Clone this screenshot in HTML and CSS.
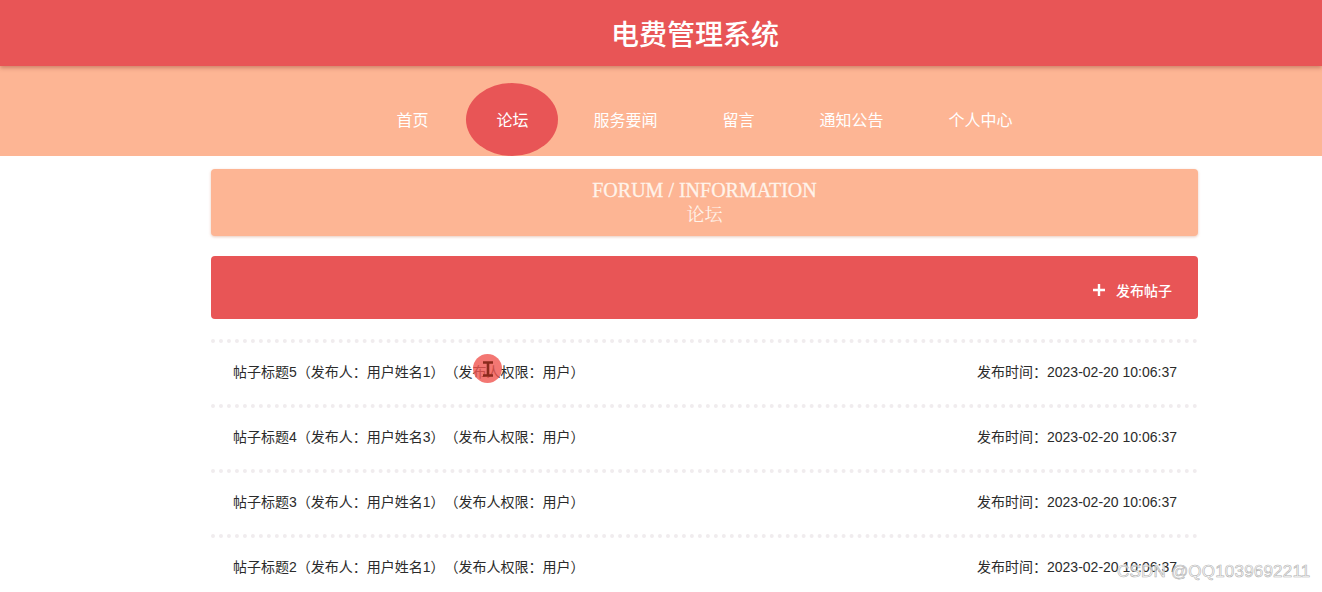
FILE: index.html
```html
<!DOCTYPE html>
<html lang="zh-CN">

<head>
    <meta charset="UTF-8">
    <meta name="viewport" content="width=device-width, initial-scale=1.0">
    <title>电费管理系统</title>
    <link rel="stylesheet" href="styles.css">
</head>

<body>
    <div class="header">
        <h1 class="site-title">电费管理系统</h1>
    </div>

    <div class="nav">
        <ul class="nav-list">
            <li><a href="#">首页</a></li>
            <li class="active"><a href="#">论坛</a></li>
            <li><a href="#">服务要闻</a></li>
            <li><a href="#">留言</a></li>
            <li><a href="#">通知公告</a></li>
            <li><a href="#">个人中心</a></li>
        </ul>
    </div>

    <div class="container">
        <div class="page-title">
            <div class="page-title-en">FORUM / INFORMATION</div>
            <div class="page-title-cn">论坛</div>
        </div>

        <div class="action-bar">
            <button class="add-btn">
                <svg width="14" height="14" viewBox="0 0 14 14">
                    <path d="M7 1v12M1 7h12" stroke="#fff" stroke-width="2.4" fill="none" />
                </svg>
                发布帖子
            </button>
        </div>

        <ul class="post-list">
            <li>
                <span class="post-title">帖子标题5（发布人：用户姓名1）（发布人权限：用户）</span>
                <span class="post-time">发布时间：2023-02-20 10:06:37</span>
            </li>
            <li>
                <span class="post-title">帖子标题4（发布人：用户姓名3）（发布人权限：用户）</span>
                <span class="post-time">发布时间：2023-02-20 10:06:37</span>
            </li>
            <li>
                <span class="post-title">帖子标题3（发布人：用户姓名1）（发布人权限：用户）</span>
                <span class="post-time">发布时间：2023-02-20 10:06:37</span>
            </li>
            <li>
                <span class="post-title">帖子标题2（发布人：用户姓名1）（发布人权限：用户）</span>
                <span class="post-time">发布时间：2023-02-20 10:06:37</span>
            </li>
        </ul>
    </div>

    <!-- screen recorder click marker -->
    <div class="click-marker">
        <svg width="14" height="16" viewBox="0 0 14 16">
            <path d="M2 1.5h10M2 14.5h10M7 1.5v13" stroke="#8a2a1c" stroke-width="2.6" fill="none" />
        </svg>
    </div>

    <div class="watermark">CSDN @QQ1039692211</div>
</body>

</html>
```

FILE: styles.css
```css
* {
    margin: 0;
    padding: 0;
    box-sizing: border-box;
    list-style: none;
    text-decoration: none;
}

body {
    background-color: white;
    font-family: "Liberation Sans", "Noto Sans CJK SC", sans-serif;
    text-spacing-trim: space-all;
    overflow: hidden;
}

.header {
    position: relative;
    z-index: 2;
    height: 66px;
    background-color: #e85556;
    box-shadow: 0 2px 4px rgba(120, 40, 30, 0.35);
    display: flex;
    align-items: center;
    justify-content: center;
    padding-left: 68px;
}

.site-title {
    color: white;
    font-size: 28px;
    font-weight: 500;
    font-family: "Noto Sans CJK SC", sans-serif;
}

.nav {
    height: 90px;
    background-color: #fdb594;
    padding-top: 17px;
}

.nav-list {
    display: flex;
    justify-content: center;
    gap: 5px;
    padding-left: 87px;
}

.nav-list li:first-child {
    margin-right: 3px;
}

.nav-list li a {
    display: block;
    height: 73px;
    line-height: 73px;
    padding: 0 30px;
    color: white;
    font-size: 16px;
    font-family: "Noto Sans CJK SC", sans-serif;
}

.nav-list li.active a {
    background-color: #e85556;
    border-radius: 50%;
}

.container {
    width: 987px;
    margin: 13px 0 0 211px;
}

.page-title {
    background-color: #fdb594;
    border-radius: 4px;
    box-shadow: 0 1px 3px rgba(200, 120, 90, 0.4);
    padding: 10px 0 12px;
    text-align: center;
    color: #fff3ea;
}

.page-title-en {
    font-family: "Liberation Serif", serif;
    font-size: 20px;
    line-height: 23px;
    -webkit-text-stroke: 0.3px #fff3ea;
}

.page-title-cn {
    font-family: "Noto Serif CJK SC", "Noto Sans CJK SC", serif;
    font-size: 18px;
    line-height: 22px;
}

.action-bar {
    margin-top: 20px;
    height: 63px;
    background-color: #e85556;
    border-radius: 4px;
    display: flex;
    align-items: center;
    justify-content: flex-end;
    padding: 4px 26px 0 0;
}

.add-btn {
    display: flex;
    align-items: center;
    gap: 10px;
    background: none;
    border: none;
    color: white;
    font-size: 14px;
    font-weight: 500;
    font-family: "Noto Sans CJK SC", sans-serif;
    cursor: pointer;
}

.post-list {
    margin-top: 20px;
}

.post-list li {
    display: flex;
    justify-content: space-between;
    align-items: center;
    height: 65px;
    padding: 0 21px 6px 22px;
    border-top: 4px dotted #f0ecee;
    font-size: 14px;
    color: #2b2b2b;
}

.click-marker {
    position: absolute;
    left: 473px;
    top: 354px;
    width: 29px;
    height: 29px;
    border-radius: 50%;
    background-color: rgba(240, 85, 80, 0.8);
    display: flex;
    align-items: center;
    justify-content: center;
}

.watermark {
    position: absolute;
    left: 1117px;
    top: 562px;
    font-size: 17px;
    color: rgba(255, 255, 255, 0.75);
    -webkit-text-stroke: 0.6px #b0b0b0;
    letter-spacing: 0.2px;
}
```
